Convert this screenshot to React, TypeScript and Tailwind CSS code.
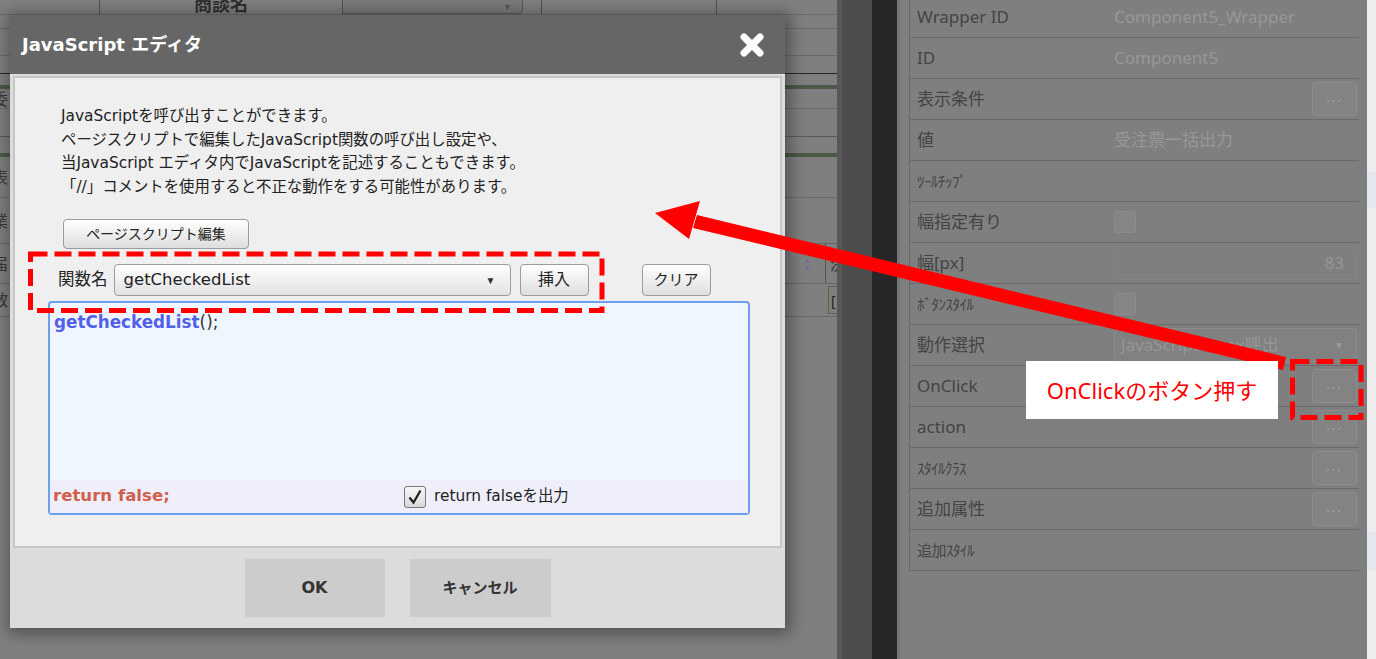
import React from "react";

const jp = "font-['Noto_Sans','Noto_Sans_CJK_JP',sans-serif]";
const dv = "font-['DejaVu_Sans','Noto_Sans_CJK_JP',sans-serif]";

type Row = {
	label: string;
	value?: string;
	btn?: boolean;
	check?: boolean;
	num?: string;
	select?: string;
	narrow?: boolean;
};

const rows: Row[] = [
	{ label: "Wrapper ID", value: "Component5_Wrapper" },
	{ label: "ID", value: "Component5" },
	{ label: "表示条件", btn: true },
	{ label: "値", value: "受注票一括出力" },
	{ label: "ﾂｰﾙﾁｯﾌﾟ", narrow: true },
	{ label: "幅指定有り", check: true },
	{ label: "幅[px]", num: "83" },
	{ label: "ﾎﾞﾀﾝｽﾀｲﾙ", check: true, narrow: true },
	{ label: "動作選択", select: "JavaScript/Apex呼出" },
	{ label: "OnClick", btn: true },
	{ label: "action", btn: true },
	{ label: "ｽﾀｲﾙｸﾗｽ", btn: true, narrow: true },
	{ label: "追加属性", btn: true },
	{ label: "追加ｽﾀｲﾙ", narrow: true },
];

function PropRow({ row }: { row: Row }) {
	return (
		<div className="h-[41px] flex items-center border-l border-b border-[#6a6a6a] pl-[7px]">
			<div
				className={`w-[197px] shrink-0 text-[#444444] ${row.narrow ? "text-[15px] tracking-[-0.5px]" : "text-[17px]"} ${jp}`}
			>
				{row.label}
			</div>
			<div className="flex-1 flex items-center h-full pr-[2px]">
				{row.value && <span className={`text-[17px] text-[#979797] ${jp}`}>{row.value}</span>}
				{row.check && <div className="w-[22px] h-[22px] rounded-[3px] border border-[#8c8c8c] bg-[#858585]" />}
				{row.num && (
					<div className="flex-1 h-[34px] flex items-center justify-end pr-[12px] rounded-[3px] border border-[#848484]">
						<span className={`text-[17px] text-[#969696] ${jp}`}>{row.num}</span>
					</div>
				)}
				{row.select && (
					<div className="flex-1 h-[34px] flex items-center justify-between px-[6px] rounded-[4px] border border-[#8c8c8c] bg-[#818181]">
						<span className={`text-[17px] text-[#969696] ${jp}`}>{row.select}</span>
						<span className="text-[10px] text-[#9a9a9a] pr-[6px]">▼</span>
					</div>
				)}
				{row.btn && (
					<div className="ml-auto w-[45px] h-[34px] rounded-[4px] border border-[#8d8d8d] bg-[#838383] flex items-center justify-center">
						<span className="text-[13px] tracking-[2px] text-[#a3a3a3] -mt-[2px]">...</span>
					</div>
				)}
			</div>
		</div>
	);
}

function GradButton({ children, className }: { children: React.ReactNode; className: string }) {
	return (
		<div
			className={`flex items-center justify-center rounded-[4px] border border-[#9c9c9c] bg-gradient-to-b from-[#ffffff] to-[#dedede] text-[#222] ${dv} ${className}`}
		>
			{children}
		</div>
	);
}

function Modal() {
	return (
		<div className="absolute left-[10px] top-[15px] w-[775px] h-[613px] flex flex-col bg-[#dcdcdc] shadow-[2px_2px_14px_4px_rgba(0,0,0,0.35)]">
			{/* タイトルバー */}
			<div className="h-[59px] shrink-0 bg-[#666666] flex items-center justify-between pl-[12px] pr-[20px]">
				<span className={`text-white font-bold text-[18px] ${dv}`}>JavaScript エディタ</span>
				<svg width="26" height="26" viewBox="0 0 26 26">
					<path d="M5 5 L21 21 M21 5 L5 21" stroke="#fff" strokeWidth="7" strokeLinecap="round" />
				</svg>
			</div>

			{/* 本体 */}
			<div className="pt-[2px] px-[3px]">
				<div className="h-[472px] border-2 border-[#c6c6c6] bg-[#efefef] pl-[31px] pt-[27px]">
					<div className={`pl-[15px] text-[15.4px] leading-[23.5px] text-[#222] ${dv}`}>
						<p>JavaScriptを呼び出すことができます。</p>
						<p>ページスクリプトで編集したJavaScript関数の呼び出し設定や、</p>
						<p>当JavaScript エディタ内でJavaScriptを記述することもできます。</p>
						<p>「//」コメントを使用すると不正な動作をする可能性があります。</p>
					</div>

					<GradButton className="mt-[20px] ml-[17px] w-[186px] h-[30px] text-[14px]">ページスクリプト編集</GradButton>

					<div className="mt-[15px] flex items-center h-[32px]">
						<span className={`pl-[12px] text-[16.5px] text-[#222] ${dv}`}>関数名</span>
						<div className="ml-[6px] w-[397px] h-[32px] rounded-[4px] border border-[#9c9c9c] bg-gradient-to-b from-[#ffffff] to-[#e2e2e2] flex items-center justify-between pl-[9px] pr-[14px]">
							<span className={`text-[16.5px] text-[#222] ${dv}`}>getCheckedList</span>
							<span className="text-[10px] text-[#333]">▼</span>
						</div>
						<GradButton className="ml-[9px] w-[69px] h-[32px] text-[16px]">挿入</GradButton>
						<GradButton className="ml-[53px] w-[69px] h-[32px] text-[15px]">クリア</GradButton>
					</div>

					<div className="mt-[5px] ml-[2px] w-[702px] h-[214px] rounded-[4px] border-2 border-[#6d9ff0] bg-[#f0f6ff] flex flex-col">
						<div className={`flex-1 pt-[9px] pl-[4px] text-[16.8px] leading-[20px] ${dv}`}>
							<span className="font-bold text-[#5160ea]">getCheckedList</span>
							<span className="text-[#333]">();</span>
						</div>
						<div className="h-[33px] bg-[#efeffb] flex items-center">
							<span className={`w-[354px] pl-[3px] font-bold text-[16.6px] text-[#d0604a] ${dv}`}>return false;</span>
							<div className="w-[22px] h-[22px] rounded-[3px] border border-[#777] bg-gradient-to-b from-[#f7f7f7] to-[#d8d8d8] flex items-center justify-center">
								<svg width="18" height="18" viewBox="0 0 18 18">
									<path d="M3.5 9.5 L7.5 14.5 L14.5 2.5" stroke="#1e1e1e" strokeWidth="2.2" fill="none" />
								</svg>
							</div>
							<span className={`ml-[8px] text-[15.4px] text-[#222] ${dv}`}>return falseを出力</span>
						</div>
					</div>
				</div>
			</div>

			{/* フッター */}
			<div className="flex-1 flex justify-center gap-[25px] pt-[11px]">
				<div className={`w-[140px] h-[58px] bg-[#cccccc] flex items-center justify-center font-bold text-[16px] text-[#333] ${dv}`}>
					OK
				</div>
				<div className={`w-[141px] h-[58px] bg-[#cccccc] flex items-center justify-center font-bold text-[15px] text-[#333] ${dv}`}>
					キャンセル
				</div>
			</div>
		</div>
	);
}

export default function App() {
	return (
		<div className="relative w-[1376px] h-[659px] overflow-hidden bg-[#7f7f7f] flex">
			{/* 背景のページ（暗転） */}
			<div className="w-[837px] shrink-0 flex flex-col">
				<div className="h-[15px] flex border-b border-[#6c6c6c]">
					<div className="w-[100px] border-r border-[#505050]" />
					<div className="w-[243px] border-r border-[#505050] flex justify-center items-start overflow-hidden">
						<span className={`font-bold text-[18px] leading-[18px] -mt-[5px] text-[#2f2f2f] ${jp}`}>商談名</span>
					</div>
					<div className="w-[180px] rounded-br-[4px] border-r border-b border-[#5c5c5c] bg-[#7a7a7a] flex justify-end items-center pr-[10px]">
						<span className="text-[9px] text-[#555]">▼</span>
					</div>
					<div className="w-[19px] border-r border-[#505050]" />
					<div className="w-[175px] border-r border-[#505050]" />
				</div>
				<div className="h-[14px] border-b border-[#6a6a6a]" />
				<div className="h-[27px] border-b border-[#6a6a6a]" />
				<div className="h-[18px] border-b border-[#262626]" />
				<div className="h-[11px]" />
				<div className="h-[4px] bg-[#4b5a47]" />
				<div className="h-[20px] border-b border-[#6a6a6a] flex items-center">
					<span className={`-ml-[8px] text-[16px] text-[#3a3a3a] ${jp}`}>委</span>
				</div>
				<div className="h-[28px] border-b border-[#595959]" />
				<div className="h-[16px]" />
				<div className="h-[4px] bg-[#4b5a47]" />
				<div className="h-[40px] flex items-center">
					<span className={`-ml-[8px] text-[16px] text-[#3a3a3a] ${jp}`}>表</span>
				</div>
				<div className="h-[46px] border-t border-[#6a6a6a] flex items-center">
					<span className={`-ml-[8px] text-[16px] text-[#3a3a3a] ${jp}`}>業</span>
				</div>
				<div className="h-[41px] border-t border-b border-[#666] flex items-center">
					<span className={`-ml-[8px] text-[16px] text-[#3a3a3a] ${jp}`}>届</span>
					<div className="ml-auto flex items-center h-full">
						<span className="flex flex-col items-center text-[8px] leading-[8px] text-[#6e6ea8] mr-[14px]">
							<span>▲</span>
							<span>▼</span>
						</span>
						<div className="w-[1px] h-full bg-[#555]" />
						<span className={`w-[11px] pl-[4px] overflow-hidden text-[16px] text-[#333] ${jp}`}>決</span>
					</div>
				</div>
				<div className="h-[33px] border-b border-[#666] flex items-center">
					<span className={`-ml-[8px] text-[16px] text-[#3a3a3a] ${jp}`}>数</span>
					<div className="ml-auto w-[9px] h-[28px] border-l border-t border-b border-[#4f6a45] flex items-center pl-[2px]">
						<span className="text-[14px] text-[#222]">[</span>
					</div>
				</div>
			</div>

			<div className="w-[35px] shrink-0 bg-[#4d4d4d] border-l-[5px] border-[#575757]" />
			<div className="w-[25px] shrink-0 bg-[#262626]" />

			{/* プロパティパネル */}
			<div className="w-[470px] shrink-0 pl-[9px] pr-[8px] border-l-[3px] border-[#747474]">
				<div className="-mt-[4px] border-t border-[#6a6a6a]">
					{rows.map((row) => (
						<PropRow key={row.label} row={row} />
					))}
				</div>
			</div>
			<div className="flex-1 flex flex-col bg-[#eeeeee]">
				<div className="h-[172px]" />
				<div className="h-[36px] bg-[#e5e7ee]" />
				<div className="h-[324px]" />
				<div className="h-[38px] bg-[#e5e7ee]" />
			</div>

			<Modal />

			{/* 注釈 */}
			<svg className="absolute left-0 top-0 pointer-events-none" width="1376" height="659" viewBox="0 0 1376 659">
				<rect x="30.5" y="254" width="571.5" height="56.5" fill="none" stroke="#ff0000" strokeWidth="5" strokeDasharray="17 7" />
				<rect x="1292.5" y="361.5" width="68.5" height="56" fill="none" stroke="#ff0000" strokeWidth="5" strokeDasharray="17 7" />
				<polygon points="1286,357 1283,370 693,228 697,215" fill="#ff0000" />
				<polygon points="655,213 700,201 689,239" fill="#ff0000" />
			</svg>
			<div className="absolute left-[1026px] top-[361px] w-[252px] h-[58px] bg-white flex items-center justify-center">
				<span className={`text-[22px] text-[#ff0000] ${jp}`}>OnClickのボタン押す</span>
			</div>
		</div>
	);
}
